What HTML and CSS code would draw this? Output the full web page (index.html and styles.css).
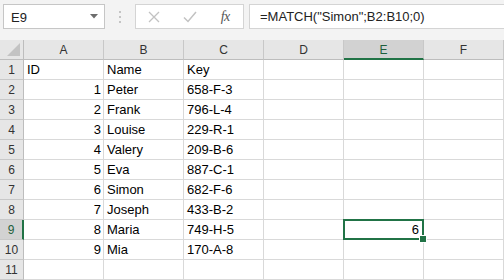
FILE: index.html
```html
<!DOCTYPE html>
<html>
<head>
<meta charset="utf-8">
<link rel="stylesheet" href="styles.css">
</head>
<body>
<div class="toolbar">
  <div class="namebox">
    <span class="namebox-text">E9</span>
    <svg class="dropdown" width="8" height="5" viewBox="0 0 8 5"><polygon points="0,0 8,0 4,4.5" fill="#6d6d6d"/></svg>
  </div>
  <svg class="grip" width="4" height="14" viewBox="0 0 4 14">
    <circle cx="2" cy="2" r="1" fill="#b4b4b4"/>
    <circle cx="2" cy="7" r="1" fill="#b4b4b4"/>
    <circle cx="2" cy="12" r="1" fill="#b4b4b4"/>
  </svg>
  <div class="fxbox">
    <span class="fxslot"><svg width="12" height="12" viewBox="0 0 12 12"><path d="M1 1 L11 11 M11 1 L1 11" stroke="#c2c2c2" stroke-width="1.3" fill="none"/></svg></span>
    <span class="fxslot"><svg width="14" height="12" viewBox="0 0 14 12"><path d="M1 6.5 L5 10.5 L13 1" stroke="#c2c2c2" stroke-width="1.5" fill="none"/></svg></span>
    <span class="fxslot fxlabel">fx</span>
  </div>
  <div class="formula">=MATCH("Simon";B2:B10;0)</div>
</div>
<div class="sheet">
  <div class="corner"><span class="corner-tri"></span></div>
  <div class="colhead">A</div>
  <div class="colhead">B</div>
  <div class="colhead">C</div>
  <div class="colhead">D</div>
  <div class="colhead active-col">E</div>
  <div class="colhead">F</div>
  <div class="filler head-fill"></div>

  <div class="rowhead">1</div><div class="cell">ID</div><div class="cell">Name</div><div class="cell">Key</div><div class="cell"></div><div class="cell"></div><div class="cell"></div><div class="filler"></div>
  <div class="rowhead">2</div><div class="cell num">1</div><div class="cell">Peter</div><div class="cell">658-F-3</div><div class="cell"></div><div class="cell"></div><div class="cell"></div><div class="filler"></div>
  <div class="rowhead">3</div><div class="cell num">2</div><div class="cell">Frank</div><div class="cell">796-L-4</div><div class="cell"></div><div class="cell"></div><div class="cell"></div><div class="filler"></div>
  <div class="rowhead">4</div><div class="cell num">3</div><div class="cell">Louise</div><div class="cell">229-R-1</div><div class="cell"></div><div class="cell"></div><div class="cell"></div><div class="filler"></div>
  <div class="rowhead">5</div><div class="cell num">4</div><div class="cell">Valery</div><div class="cell">209-B-6</div><div class="cell"></div><div class="cell"></div><div class="cell"></div><div class="filler"></div>
  <div class="rowhead">6</div><div class="cell num">5</div><div class="cell">Eva</div><div class="cell">887-C-1</div><div class="cell"></div><div class="cell"></div><div class="cell"></div><div class="filler"></div>
  <div class="rowhead">7</div><div class="cell num">6</div><div class="cell">Simon</div><div class="cell">682-F-6</div><div class="cell"></div><div class="cell"></div><div class="cell"></div><div class="filler"></div>
  <div class="rowhead">8</div><div class="cell num">7</div><div class="cell">Joseph</div><div class="cell">433-B-2</div><div class="cell"></div><div class="cell"></div><div class="cell"></div><div class="filler"></div>
  <div class="rowhead active-row">9</div><div class="cell num">8</div><div class="cell">Maria</div><div class="cell">749-H-5</div><div class="cell"></div><div class="cell num selected">6</div><div class="cell"></div><div class="filler"></div>
  <div class="rowhead">10</div><div class="cell num">9</div><div class="cell">Mia</div><div class="cell">170-A-8</div><div class="cell"></div><div class="cell"></div><div class="cell"></div><div class="filler"></div>
  <div class="rowhead">11</div><div class="cell"></div><div class="cell"></div><div class="cell"></div><div class="cell"></div><div class="cell"></div><div class="cell"></div><div class="filler"></div>
</div>
</body>
</html>
```

FILE: styles.css
```css
* { box-sizing: border-box; }
html, body { margin: 0; padding: 0; }
body {
  width: 504px;
  height: 280px;
  overflow: hidden;
  background: #f3f3f3;
  font-family: "Liberation Sans", Arial, sans-serif;
  color: #000;
}
.toolbar {
  height: 40px;
  display: flex;
  align-items: flex-start;
  padding-top: 4px;
  background: #f3f3f3;
}
.namebox {
  margin-left: 3px;
  width: 102px;
  height: 25px;
  background: #fff;
  border: 1px solid #c6c6c6;
  display: flex;
  align-items: center;
  justify-content: space-between;
  padding: 1px 6px 0 7px;
}
.namebox-text { font-size: 13px; color: #222; }
.dropdown { margin-top: -2px; }
.grip { margin: 6px 0 0 13px; }
.fxbox {
  margin-left: 13px;
  width: 109px;
  height: 25px;
  background: #fff;
  border: 1px solid #d4d4d4;
  display: flex;
  align-items: center;
}
.fxslot {
  width: 36px;
  display: flex;
  justify-content: center;
  align-items: center;
}
.fxlabel {
  font-family: "Liberation Serif", "Times New Roman", serif;
  font-style: italic;
  font-size: 14px;
  color: #555;
  letter-spacing: -0.5px;
}
.formula {
  margin-left: 5px;
  flex: 1;
  height: 25px;
  background: #fff;
  border: 1px solid #d4d4d4;
  border-right: none;
  font-size: 13px;
  line-height: 24px;
  padding-left: 10px;
  color: #222;
  white-space: nowrap;
}
.sheet {
  display: grid;
  grid-template-columns: 24px repeat(6, 80px) 1fr;
  grid-template-rows: 20px repeat(11, 20px);
  background: #fff;
}
.corner, .colhead, .rowhead {
  background: #e6e6e6;
  color: #333;
  font-size: 12px;
}
.corner {
  position: relative;
  border-right: 1px solid #bdbdbd;
  border-bottom: 1px solid #bdbdbd;
}
.corner-tri {
  position: absolute;
  right: 3px;
  bottom: 3px;
  width: 0;
  height: 0;
  border-left: 13px solid transparent;
  border-bottom: 13px solid #c3c3c3;
}
.colhead {
  border-right: 1px solid #c8c8c8;
  border-bottom: 1px solid #bdbdbd;
  text-align: center;
  line-height: 21px;
}
.head-fill { background: #e6e6e6; border-bottom: 1px solid #bdbdbd; }
.active-col {
  background: #d2d2d2;
  color: #1e5f3c;
  border-bottom: 2px solid #217346;
}
.rowhead {
  border-right: 1px solid #bdbdbd;
  border-bottom: 1px solid #c8c8c8;
  text-align: center;
  line-height: 20px;
}
.active-row {
  background: #d2d2d2;
  color: #1e5f3c;
  border-right: 2px solid #217346;
}
.cell {
  border-right: 1px solid #d9d9d9;
  border-bottom: 1px solid #d9d9d9;
  font-size: 13px;
  line-height: 20px;
  padding: 0 3px 0 3px;
  white-space: nowrap;
  overflow: visible;
}
.num { text-align: right; padding-right: 2px; }
.filler { border-bottom: 1px solid #d9d9d9; }
.selected {
  position: relative;
  padding-right: 4px;
}
.selected::before {
  content: "";
  position: absolute;
  left: -1px;
  top: -1px;
  right: -1px;
  bottom: -1px;
  border: 2px solid #217346;
}
.selected::after {
  content: "";
  position: absolute;
  right: -4px;
  bottom: -4px;
  width: 6px;
  height: 6px;
  background: #217346;
  border: 1px solid #fff;
}
```
